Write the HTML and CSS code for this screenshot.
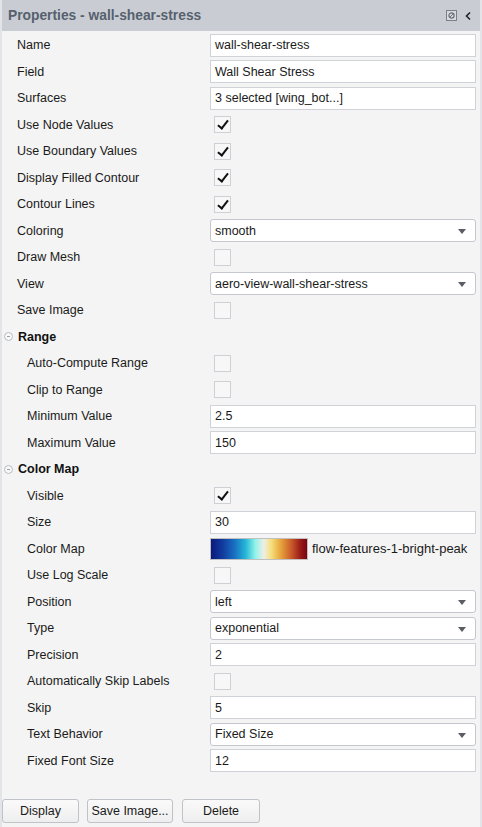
FILE: index.html
```html
<!DOCTYPE html>
<html>
<head>
<meta charset="utf-8">
<link rel="stylesheet" href="styles.css">
</head>
<body>
<div class="panel">
  <div class="header">
    <span class="title">Properties - wall-shear-stress</span>
    <span class="hicons">
      <svg width="11" height="11" viewBox="0 0 11 11"><rect x="0.5" y="0.5" width="10" height="10" fill="#d8dbe0" stroke="#7a7f88"/><circle cx="5.5" cy="5.5" r="2.6" fill="none" stroke="#6a6f78" stroke-width="1.2"/><line x1="3" y1="8" x2="8" y2="3" stroke="#6a6f78" stroke-width="1"/></svg>
      <svg width="8" height="10" viewBox="0 0 8 10"><path d="M6 1.5 L2.5 5 L6 8.5" fill="none" stroke="#222" stroke-width="1.6"/></svg>
    </span>
  </div>
  <div class="body">
    <div class="row"><span class="label">Name</span><div class="input">wall-shear-stress</div></div>
    <div class="row"><span class="label">Field</span><div class="input">Wall Shear Stress</div></div>
    <div class="row"><span class="label">Surfaces</span><div class="input">3 selected [wing_bot...]</div></div>
    <div class="row"><span class="label">Use Node Values</span><span class="cb on"></span></div>
    <div class="row"><span class="label">Use Boundary Values</span><span class="cb on"></span></div>
    <div class="row"><span class="label">Display Filled Contour</span><span class="cb on"></span></div>
    <div class="row"><span class="label">Contour Lines</span><span class="cb on"></span></div>
    <div class="row"><span class="label">Coloring</span><div class="select">smooth<span class="arrow"></span></div></div>
    <div class="row"><span class="label">Draw Mesh</span><span class="cb"></span></div>
    <div class="row"><span class="label">View</span><div class="select">aero-view-wall-shear-stress<span class="arrow"></span></div></div>
    <div class="row"><span class="label">Save Image</span><span class="cb"></span></div>
    <div class="section"><span class="toggle"></span>Range</div>
    <div class="row sub"><span class="label">Auto-Compute Range</span><span class="cb"></span></div>
    <div class="row sub"><span class="label">Clip to Range</span><span class="cb"></span></div>
    <div class="row sub"><span class="label">Minimum Value</span><div class="input">2.5</div></div>
    <div class="row sub"><span class="label">Maximum Value</span><div class="input">150</div></div>
    <div class="section"><span class="toggle"></span>Color Map</div>
    <div class="row sub"><span class="label">Visible</span><span class="cb on"></span></div>
    <div class="row sub"><span class="label">Size</span><div class="input">30</div></div>
    <div class="row sub"><span class="label">Color Map</span><div class="cmap"><span class="grad"></span><span class="cmname">flow-features-1-bright-peak</span></div></div>
    <div class="row sub"><span class="label">Use Log Scale</span><span class="cb"></span></div>
    <div class="row sub"><span class="label">Position</span><div class="select">left<span class="arrow"></span></div></div>
    <div class="row sub"><span class="label">Type</span><div class="select">exponential<span class="arrow"></span></div></div>
    <div class="row sub"><span class="label">Precision</span><div class="input">2</div></div>
    <div class="row sub"><span class="label">Automatically Skip Labels</span><span class="cb"></span></div>
    <div class="row sub"><span class="label">Skip</span><div class="input">5</div></div>
    <div class="row sub"><span class="label">Text Behavior</span><div class="select">Fixed Size<span class="arrow"></span></div></div>
    <div class="row sub"><span class="label">Fixed Font Size</span><div class="input">12</div></div>
  </div>
  <div class="buttons">
    <button class="btn b1">Display</button>
    <button class="btn b2">Save Image...</button>
    <button class="btn b3">Delete</button>
  </div>
</div>
</body>
</html>
```
FILE: styles.css
```css
html, body {
  margin: 0;
  padding: 0;
  background: #f4f4f4;
}
body {
  font-family: "Liberation Sans", Arial, sans-serif;
  font-size: 12.5px;
  color: #1a1a1a;
  width: 482px;
  height: 827px;
  overflow: hidden;
}
.panel {
  display: flex;
  flex-direction: column;
  height: 827px;
  border-left: 2px solid #e2e4e7;
  border-right: 2px solid #e2e4e7;
  box-sizing: border-box;
}
.header {
  height: 31px;
  background: #c9cdd3;
  display: flex;
  align-items: center;
  justify-content: space-between;
  padding: 0 6px 0 6px;
  box-sizing: border-box;
  flex: none;
}
.title {
  font-weight: bold;
  font-size: 13.8px;
  color: #56606e;
}
.hicons {
  display: flex;
  align-items: center;
  gap: 7px;
  padding-right: 2px;
}
.body {
  padding-top: 1px;
  display: flex;
  flex-direction: column;
}
.row, .section {
  height: 26.5px;
  display: grid;
  grid-template-columns: 193px 266px;
  align-items: center;
  padding-left: 15px;
}
.row.sub .label {
  padding-left: 10px;
}
.section {
  display: flex;
  align-items: center;
  padding-left: 2px;
  font-weight: bold;
  color: #111;
}
.toggle {
  width: 9px;
  height: 9px;
  border: 1px solid #b8bcc2;
  border-radius: 50%;
  box-sizing: border-box;
  position: relative;
  margin-right: 5px;
  background: #f8f8f8;
}
.toggle::after {
  content: "";
  position: absolute;
  left: 2px;
  top: 3px;
  width: 3px;
  height: 1px;
  background: #9a9ea6;
}
.input, .select {
  height: 23px;
  box-sizing: border-box;
  border: 1px solid #cfd3d8;
  background: #fff;
  display: flex;
  align-items: center;
  padding-left: 4px;
  position: relative;
}
.select {
  border-radius: 3px;
  border-color: #c4c8ce;
  background: #fff;
}
.arrow {
  position: absolute;
  right: 9px;
  top: 9px;
  width: 0;
  height: 0;
  border-left: 4.5px solid transparent;
  border-right: 4.5px solid transparent;
  border-top: 5px solid #5a5d63;
}
.cb {
  width: 17px;
  height: 17px;
  box-sizing: border-box;
  border: 1px solid #cdd0d4;
  background: #f7f7f7;
  margin-left: 4px;
  position: relative;
}
.cb.on::after {
  content: "";
  position: absolute;
  left: 5px;
  top: 1px;
  width: 4px;
  height: 9px;
  border-right: 2.8px solid #111;
  border-bottom: 2.8px solid #111;
  transform: rotate(38deg);
}
.cmap {
  display: flex;
  align-items: center;
  gap: 4px;
}
.grad {
  width: 98px;
  height: 22px;
  border: 1px solid #c0c0c0;
  box-sizing: border-box;
  flex: none;
  background: linear-gradient(to right,
    #0b1a7c 0%, #123a9e 12%, #1a72c4 25%, #25b6d6 36%, #8ff3ea 46%,
    #eeeee6 55%, #f6de78 63%, #e6a23a 73%, #c8582a 84%, #9a1c18 93%, #7a0414 100%);
}
.cmname {
  font-size: 13px;
  white-space: nowrap;
}
.buttons {
  margin-top: auto;
  padding: 0 0 4px 0;
  display: flex;
  gap: 8px;
}
.btn {
  height: 24px;
  font-family: "Liberation Sans", Arial, sans-serif;
  font-size: 12.5px;
  color: #1a1a1a;
  background: linear-gradient(#fafafa, #eeeeee);
  border: 1px solid #bfc3c8;
  border-radius: 3px;
  padding: 0;
}
.b1 { width: 77px; }
.b2 { width: 86px; }
.b3 { width: 78px; margin-left: 1px; }
```
